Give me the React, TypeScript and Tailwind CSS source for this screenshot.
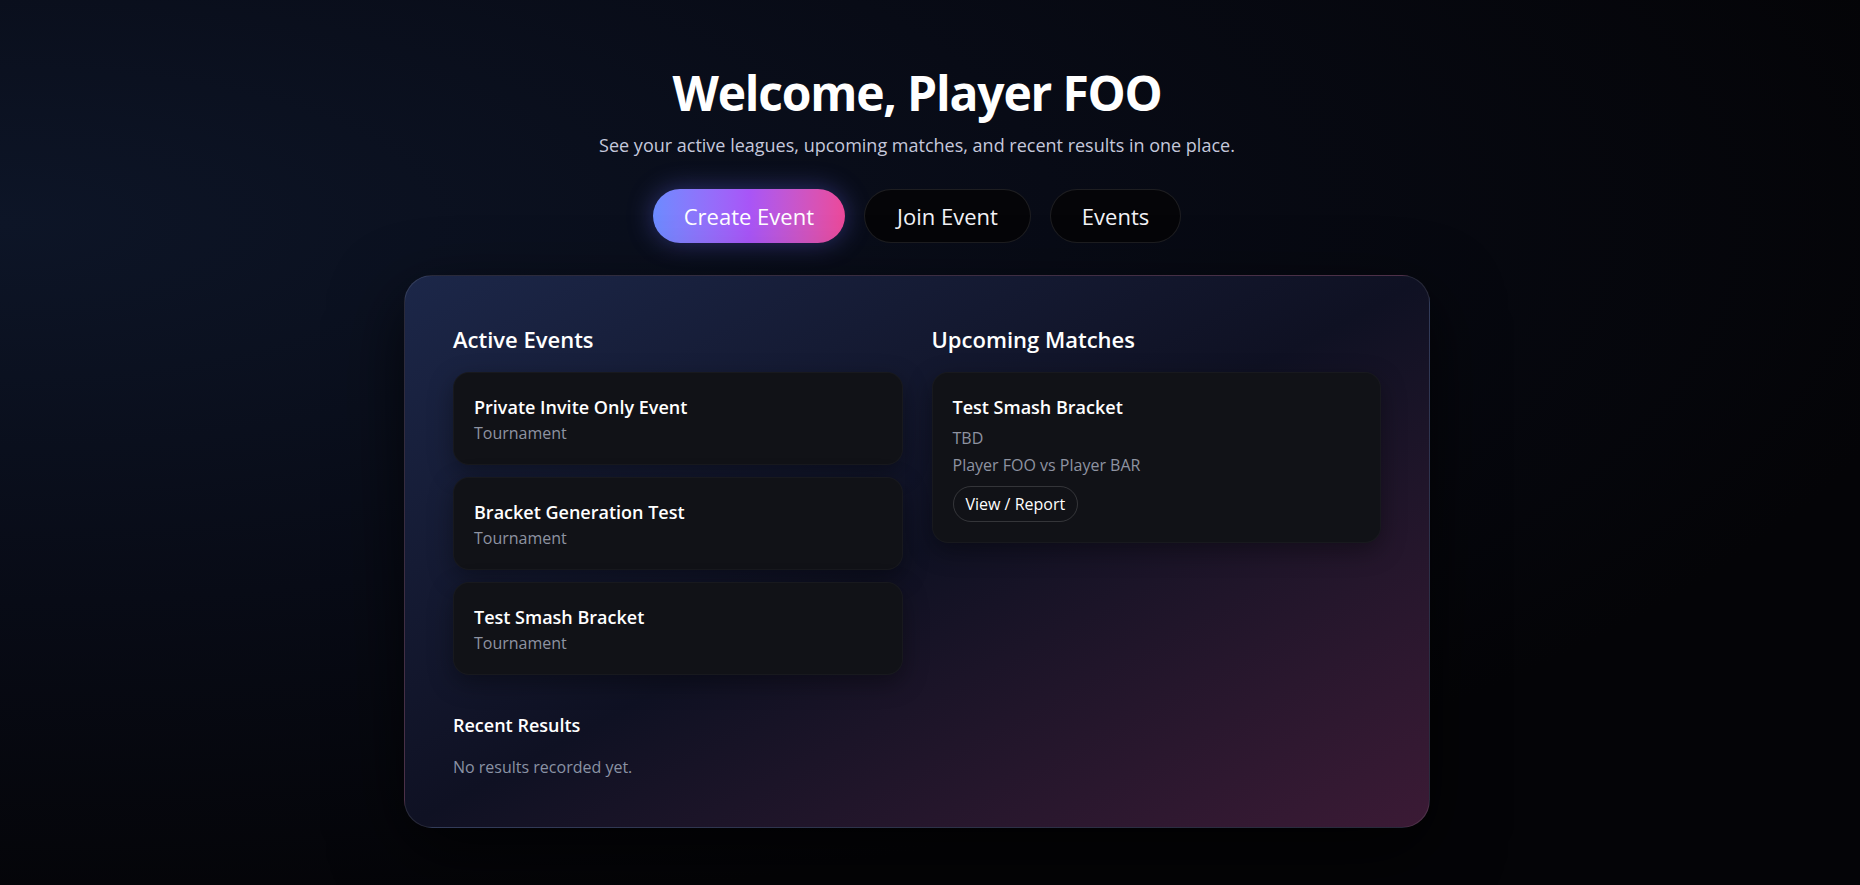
const activeEvents = [
  { name: "Private Invite Only Event", kind: "Tournament" },
  { name: "Bracket Generation Test", kind: "Tournament" },
  { name: "Test Smash Bracket", kind: "Tournament" },
]

const upcoming = [
  { event: "Test Smash Bracket", when: "TBD", players: "Player FOO vs Player BAR" },
]

export default function App() {
  return (
    <div className="min-h-screen w-full bg-[#040407] bg-[radial-gradient(ellipse_at_0%_25%,#0d1527_0%,#080b16_40%,#040407_75%)] font-['Open_Sans','Noto_Sans',sans-serif] text-white">
      <main className="flex flex-col items-center pt-[69px] pb-16 pr-[26px]">
        {/* Header */}
        <h1 className="text-5xl font-bold leading-none tracking-tight">Welcome, Player FOO</h1>
        <p className="mt-[14px] text-lg leading-7 text-[#c5c8dc]">
          See your active leagues, upcoming matches, and recent results in one place.
        </p>

        {/* Actions */}
        <div className="mt-[30px] flex items-center gap-[19px]">
          <button className="flex h-[54px] items-center rounded-full bg-gradient-to-r from-[#6b8bff] via-[#a855f7] to-[#ec4899] px-[31px] text-[22px] text-white shadow-[0_0_26px_rgba(99,102,241,0.4)]">
            Create Event
          </button>
          <button className="flex h-[54px] items-center rounded-full border border-white/10 bg-[#050508] px-8 text-[22px] text-[#f3f3f7]">
            Join Event
          </button>
          <button className="flex h-[54px] items-center rounded-full border border-white/10 bg-[#050508] px-[31px] text-[22px] text-[#f3f3f7]">
            Events
          </button>
        </div>

        {/* Dashboard panel */}
        <section className="mt-8 w-full max-w-[1026px] rounded-[28px] border border-white/10 bg-gradient-to-br from-[#1c2749] via-[#0f1123] to-[#3b1a35] p-12 shadow-[0_24px_70px_rgba(0,0,0,0.7)]">
          <div className="grid grid-cols-2 gap-[29px]">
            <div>
              <h2 className="mb-[18px] text-[22px] font-semibold leading-[30px]">Active Events</h2>
              <div className="flex flex-col gap-3">
                {activeEvents.map((ev) => (
                  <div
                    key={ev.name}
                    className="rounded-2xl border border-white/[0.03] bg-[#111217] px-5 pt-5 pb-[19px] shadow-[0_8px_24px_rgba(0,0,0,0.35)]"
                  >
                    <div className="text-lg font-semibold leading-7">{ev.name}</div>
                    <div className="text-base leading-6 text-[#8e93a1]">{ev.kind}</div>
                  </div>
                ))}
              </div>
            </div>

            <div>
              <h2 className="mb-[18px] text-[22px] font-semibold leading-[30px]">Upcoming Matches</h2>
              <div className="flex flex-col gap-3">
                {upcoming.map((m) => (
                  <div
                    key={m.event}
                    className="rounded-2xl border border-white/[0.03] bg-[#111217] p-5 shadow-[0_8px_24px_rgba(0,0,0,0.35)]"
                  >
                    <div className="text-lg font-semibold leading-7">{m.event}</div>
                    <div className="mt-1 text-base leading-[27px] text-[#8e93a1]">{m.when}</div>
                    <div className="text-base leading-[27px] text-[#8e93a1]">{m.players}</div>
                    <button className="mt-[7px] rounded-full border border-white/15 px-3 py-[5px] text-base leading-6 text-white">
                      View / Report
                    </button>
                  </div>
                ))}
              </div>
            </div>
          </div>

          <div className="mt-9">
            <h3 className="text-lg font-semibold leading-7">Recent Results</h3>
            <p className="mt-4 text-base leading-6 text-[#8a92a4]">No results recorded yet.</p>
          </div>
        </section>
      </main>
    </div>
  )
}
